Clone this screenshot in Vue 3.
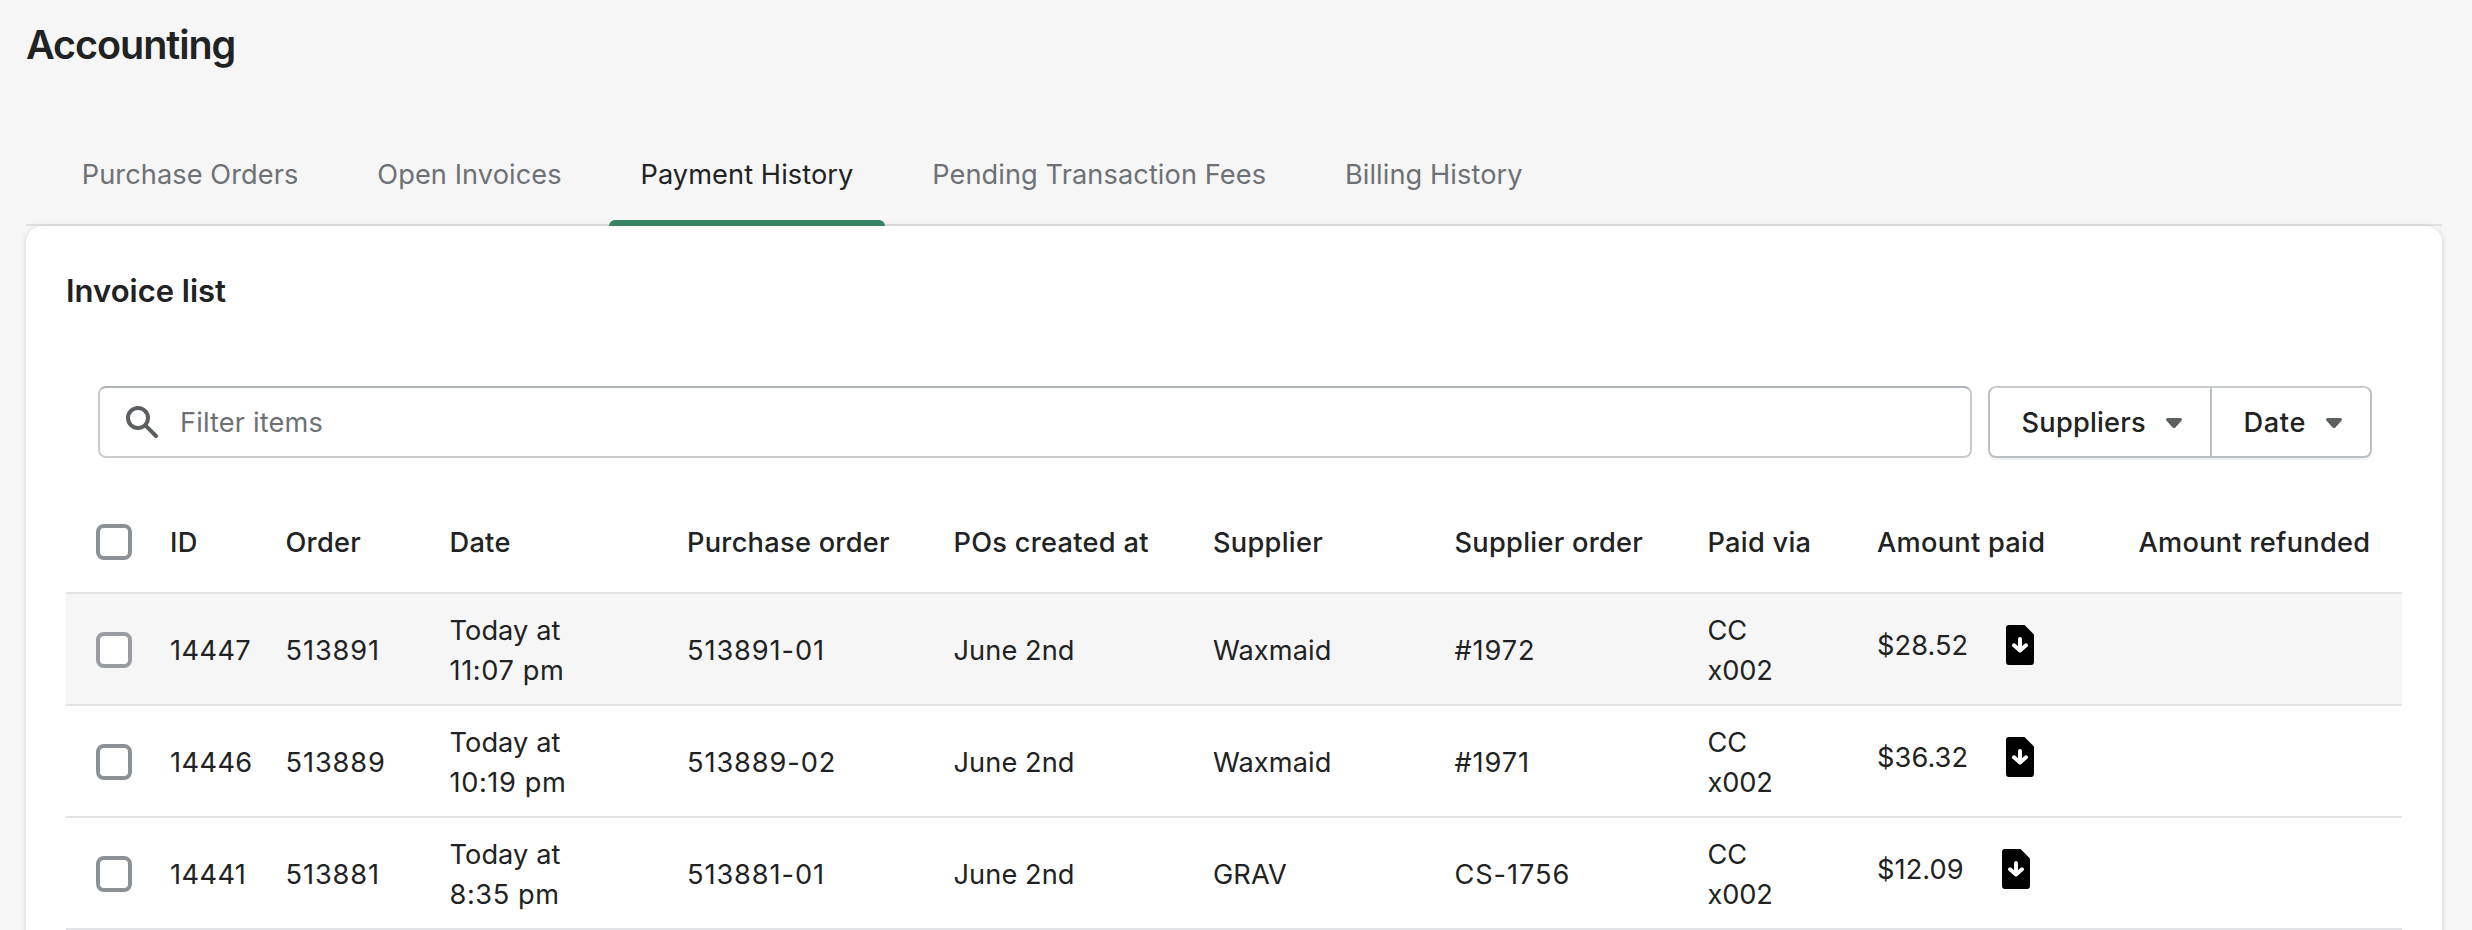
<script setup>
import { ref } from 'vue'

const tabs = ['Purchase Orders', 'Open Invoices', 'Payment History', 'Pending Transaction Fees', 'Billing History']
const activeTab = ref('Payment History')

const filters = [
  { label: 'Suppliers', cls: 'suppliers' },
  { label: 'Date', cls: 'date' },
]

const headings = [
  'ID', 'Order', 'Date', 'Purchase order', 'POs created at', 'Supplier',
  'Supplier order', 'Paid via', 'Amount paid', 'Amount refunded',
]

const rows = [
  { id: '14447', order: '513891', day: 'Today at', time: '11:07 pm', po: '513891-01', created: 'June 2nd', supplier: 'Waxmaid', so: '#1972', card: 'x002', paid: '$28.52' },
  { id: '14446', order: '513889', day: 'Today at', time: '10:19 pm', po: '513889-02', created: 'June 2nd', supplier: 'Waxmaid', so: '#1971', card: 'x002', paid: '$36.32' },
  { id: '14441', order: '513881', day: 'Today at', time: '8:35 pm', po: '513881-01', created: 'June 2nd', supplier: 'GRAV', so: 'CS-1756', card: 'x002', paid: '$12.09' },
]
</script>

<template>
  <main class="page">
    <h1 class="title">Accounting</h1>

    <nav class="tabs">
      <a v-for="t in tabs" :key="t" class="tab" :class="{ active: t === activeTab }" @click="activeTab = t">{{ t }}</a>
    </nav>

    <section class="card">
      <h2 class="card-title">Invoice list</h2>

      <div class="toolbar">
        <div class="search">
          <svg class="icon" viewBox="0 0 20 20">
            <path d="M8 12a4 4 0 1 1 0-8 4 4 0 0 1 0 8zm9.707 4.293-4.82-4.82A5.968 5.968 0 0 0 14 8a6 6 0 1 0-6 6 5.968 5.968 0 0 0 3.473-1.113l4.82 4.82a.997.997 0 0 0 1.414 0 .999.999 0 0 0 0-1.414z" />
          </svg>
          <span class="placeholder">Filter items</span>
        </div>
        <div class="group">
          <button v-for="f in filters" :key="f.label" class="filter" :class="f.cls">
            <span class="label">{{ f.label }}</span>
            <svg class="icon" viewBox="0 0 20 20">
              <path d="M13.098 8H6.902c-.751 0-1.172.754-.708 1.268l3.098 3.432c.36.399 1.055.399 1.416 0l3.098-3.433C14.27 8.754 13.849 8 13.098 8z" />
            </svg>
          </button>
        </div>
      </div>

      <div class="table">
        <div class="row head">
          <span class="check"></span>
          <span v-for="h in headings" :key="h" class="cell">{{ h }}</span>
        </div>
        <div v-for="(r, i) in rows" :key="r.id" class="row" :class="{ hovered: i === 0 }">
          <span class="check"></span>
          <span class="cell id">{{ r.id }}</span>
          <span class="cell order">{{ r.order }}</span>
          <span class="cell">{{ r.day }}<br /><span class="time">{{ r.time }}</span></span>
          <span class="cell po">{{ r.po }}</span>
          <span class="cell">{{ r.created }}</span>
          <span class="cell">{{ r.supplier }}</span>
          <span class="cell so">{{ r.so }}</span>
          <span class="cell via">CC<br />{{ r.card }}</span>
          <span class="amount">
            <span class="cell">{{ r.paid }}</span>
            <svg class="download" viewBox="0 0 28 40">
              <path d="M3 0H18.5L28 9.5V37a3 3 0 0 1-3 3H3a3 3 0 0 1-3-3V3a3 3 0 0 1 3-3z" />
              <path class="arrow" d="M14 14v11M8 20.3l6 5.2 6-5.2" />
            </svg>
          </span>
          <span></span>
        </div>
      </div>
    </section>
  </main>
</template>

<style>
body {
  margin: 0;
  background: #f6f6f6;
}
</style>

<style scoped>
.page {
  box-sizing: border-box;
  height: 930px;
  overflow: hidden;
  padding: 17px 30px 0 26px;
  background: #f6f6f6;
  color: #202223;
  font-family: Inter, 'Liberation Sans', sans-serif;
  font-size: 27.2px;
  line-height: 40px;
  letter-spacing: 0.08px;
  font-feature-settings: 'calt' 0;
}

.title {
  margin: 0;
  font-size: 39.5px;
  line-height: 56px;
  font-weight: 600;
  letter-spacing: -1.05px;
}

.tabs {
  display: flex;
  gap: 16px;
  box-sizing: border-box;
  height: 153px;
  padding: 81px 0 0 24.3px;
  box-shadow: inset 0 -2px 0 #dfe1e2;
}

.tab {
  box-sizing: border-box;
  height: 72px;
  padding: 1px 31.4px 0;
  color: #6d7175;
  cursor: pointer;
}

.tab.active {
  display: flex;
  flex-direction: column;
  justify-content: space-between;
  color: #202223;
}

.tab.active::after {
  content: '';
  height: 6px;
  margin: 0 -31.4px;
  border-radius: 6px 6px 0 0;
  background: #378262;
}

.card {
  box-sizing: border-box;
  height: 780px;
  padding: 45px 40px 0;
  border-radius: 16px;
  background: #fff;
  box-shadow: 0 0 10px rgba(23, 24, 24, 0.05), 0 2px 4px rgba(0, 0, 0, 0.15);
}

.card-title {
  margin: 0;
  font-size: 31px;
  line-height: 40px;
  font-weight: 600;
  letter-spacing: 0;
}

.toolbar {
  display: flex;
  gap: 16px;
  height: 72px;
  margin: 75px 30px 0 32px;
}

.search {
  box-sizing: border-box;
  display: flex;
  flex: 1;
  align-items: center;
  gap: 18px;
  padding: 0 22px;
  border: 2px solid #c9cccf;
  border-top-color: #aeb4b9;
  border-radius: 8px;
}

.icon {
  display: block;
  flex: none;
  width: 40px;
  height: 40px;
  fill: #5c5f62;
}

.placeholder {
  padding-top: 2px;
  color: #6d7175;
  letter-spacing: 0.15px;
}

.label {
  padding-top: 2px;
}

.group {
  display: flex;
  border-radius: 8px;
  box-shadow: 0 2px 0 rgba(0, 0, 0, 0.05);
}

.filter {
  box-sizing: border-box;
  display: flex;
  align-items: center;
  justify-content: space-between;
  height: 72px;
  padding: 0 16px 0 31.6px;
  border: 2px solid #babfc3;
  border-top-color: #c9cccf;
  background: #fff;
  color: #202223;
  font: inherit;
  font-weight: 500;
  letter-spacing: 0.2px;
}

.suppliers {
  width: 224px;
  border-radius: 8px 0 0 8px;
}

.date {
  width: 160px;
  border-left: 0;
  border-radius: 0 8px 8px 0;
  letter-spacing: 0.6px;
}

.table {
  margin-top: 34px;
}

.row {
  display: grid;
  grid-template-columns: 74px 115.5px 164px 237.5px 266.5px 259.5px 241.5px 253px 169.5px 261.5px 1fr;
  align-items: center;
  box-sizing: border-box;
  height: 112px;
  padding: 2px 0 0 30px;
  border-bottom: 2px solid #e1e3e5;
  white-space: nowrap;
}

.row.head {
  height: 102px;
  padding-top: 0;
  font-weight: 500;
  letter-spacing: 0.28px;
}

.row.hovered {
  background: #f6f6f6;
}

.cell {
  padding-top: 2px;
}

.check {
  box-sizing: border-box;
  width: 36px;
  height: 36px;
  border: 4px solid #8c9196;
  border-radius: 8px;
  background: #fff;
}

.hovered .check {
  border-color: #999ca1;
}

.id {
  letter-spacing: 0.4px;
}

.order,
.po,
.so {
  letter-spacing: 0.9px;
}

.time {
  letter-spacing: 0.6px;
}

.via {
  letter-spacing: -0.1px;
}

.amount {
  display: flex;
  align-items: center;
  gap: 38px;
  padding-bottom: 10px;
}

.download {
  display: block;
  flex: none;
  width: 28px;
  height: 40px;
}

.arrow {
  fill: none;
  stroke: #fff;
  stroke-width: 4;
  stroke-linecap: round;
  stroke-linejoin: round;
}
</style>
